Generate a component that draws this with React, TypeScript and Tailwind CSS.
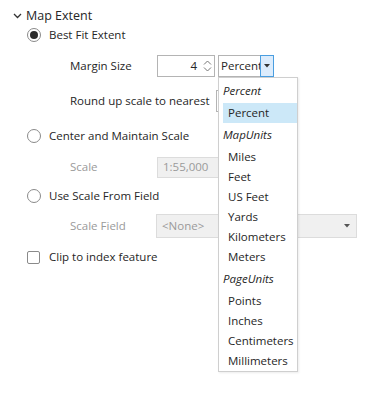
import React from "react";

const font = { fontFamily: '"Open Sans", "Noto Sans", sans-serif' };

function Radio({ checked }: { checked?: boolean }) {
  return (
    <div className="w-[14px] h-[14px] rounded-full border border-[#8a8a8a] bg-white flex items-center justify-center shrink-0">
      {checked && <div className="w-[8px] h-[8px] rounded-full bg-[#2b2b2b]" />}
    </div>
  );
}

export default function App() {
  return (
    <div className="relative w-[383px] h-[394px] bg-white text-[11.5px] text-[#262626] overflow-hidden" style={font}>
      <div className="pt-[6px]">
        {/* Map Extent */}
        <div className="h-[20px] flex items-center pl-[13px]">
          <svg width="9" height="6" viewBox="0 0 9 6" className="mr-[4px]">
            <path d="M1 1 L4.5 4.5 L8 1" fill="none" stroke="#333" strokeWidth="1.3" />
          </svg>
          <span className="text-[12.5px]">Map Extent</span>
        </div>
        {/* Best fit */}
        <div className="h-[18px] flex items-center pl-[27px]">
          <Radio checked />
          <span className="ml-[8px]">Best Fit Extent</span>
        </div>
        {/* Margin Size */}
        <div className="mt-[11px] h-[22px] flex items-center">
          <span className="pl-[70px] w-[157px]">Margin Size</span>
          <div className="w-[58px] h-[22px] border border-[#b4b4b4] bg-white flex items-center justify-end pr-[2px]">
            <span className="mr-[6px]">4</span>
            <div className="flex flex-col items-center gap-[2px]">
              <svg width="9" height="5" viewBox="0 0 9 5">
                <path d="M1 4.5 L4.5 1 L8 4.5" fill="none" stroke="#777" strokeWidth="1" />
              </svg>
              <svg width="9" height="5" viewBox="0 0 9 5">
                <path d="M1 0.5 L4.5 4 L8 0.5" fill="none" stroke="#777" strokeWidth="1" />
              </svg>
            </div>
          </div>
          <div className="ml-[3px] h-[22px] flex">
            <div className="w-[42px] h-[22px] border border-[#b4b4b4] border-r-0 bg-white flex items-center pl-[2px] whitespace-nowrap">
              Percent
            </div>
            <div className="w-[14px] h-[22px] border border-[#4a9ee0] bg-[#dcecfc] flex items-center justify-center">
              <svg width="6" height="4" viewBox="0 0 6 4">
                <path d="M0 0 L6 0 L3 3.5 Z" fill="#333" />
              </svg>
            </div>
          </div>
        </div>
        {/* Round up */}
        <div className="mt-[13px] h-[22px] flex items-center">
          <span className="pl-[70px] w-[216px] whitespace-nowrap">Round up scale to nearest</span>
          <div className="w-[60px] h-[22px] border border-[#b4b4b4] bg-white" />
        </div>
        {/* Center and maintain */}
        <div className="mt-[15px] h-[18px] flex items-center pl-[27px]">
          <Radio />
          <span className="ml-[8px]">Center and Maintain Scale</span>
        </div>
        {/* Scale */}
        <div className="mt-[11px] h-[22px] flex items-center">
          <span className="pl-[70px] w-[157px] text-[#9a9a9a]">Scale</span>
          <div className="w-[70px] h-[21px] border border-[#dcdcdc] bg-[#f0f0f0] flex items-center pl-[5px] text-[#9a9a9a]">
            1:55,000
          </div>
        </div>
        {/* Use Scale from field */}
        <div className="mt-[9px] h-[18px] flex items-center pl-[27px]">
          <Radio />
          <span className="ml-[8px]">Use Scale From Field</span>
        </div>
        {/* Scale field */}
        <div className="mt-[9px] h-[24px] flex items-center">
          <span className="pl-[70px] w-[156px] text-[#9a9a9a]">Scale Field</span>
          <div className="w-[201px] h-[24px] border border-[#dcdcdc] bg-[#f0f0f0] flex items-center justify-between pl-[5px] pr-[6px] text-[#9a9a9a]">
            <span>&lt;None&gt;</span>
            <svg width="6" height="4" viewBox="0 0 6 4">
              <path d="M0 0 L6 0 L3 3.5 Z" fill="#555" />
            </svg>
          </div>
        </div>
        {/* Clip */}
        <div className="mt-[10px] h-[18px] flex items-center pl-[27px]">
          <div className="w-[13px] h-[13px] rounded-[2px] border border-[#8a8a8a] bg-white shrink-0" />
          <span className="ml-[9px]">Clip to index feature</span>
        </div>
      </div>

      {/* Dropdown list */}
      <div className="absolute left-[218px] top-[77px] w-[80px] border border-[#cfcfcf] bg-white pt-[2px] shadow-[1px_1px_2px_rgba(0,0,0,0.08)]">
        <div className="h-[22px] flex items-center pl-[4px] italic">Percent</div>
        <div className="h-[22px] py-px pl-[4px]">
          <div className="h-[20px] bg-[#cce8f8] flex items-center pl-[5px]">Percent</div>
        </div>
        <div className="h-[22px] flex items-center pl-[4px] italic">MapUnits</div>
        <div className="h-px" />
        {["Miles", "Feet", "US Feet", "Yards", "Kilometers", "Meters"].map((t) => (
          <div key={t} className="h-[20px] flex items-center pl-[9px]">{t}</div>
        ))}
        <div className="h-[24px] flex items-center pl-[4px] italic">PageUnits</div>
        {["Points", "Inches", "Centimeters", "Millimeters"].map((t) => (
          <div key={t} className="h-[20px] flex items-center pl-[9px]">{t}</div>
        ))}
      </div>
    </div>
  );
}
